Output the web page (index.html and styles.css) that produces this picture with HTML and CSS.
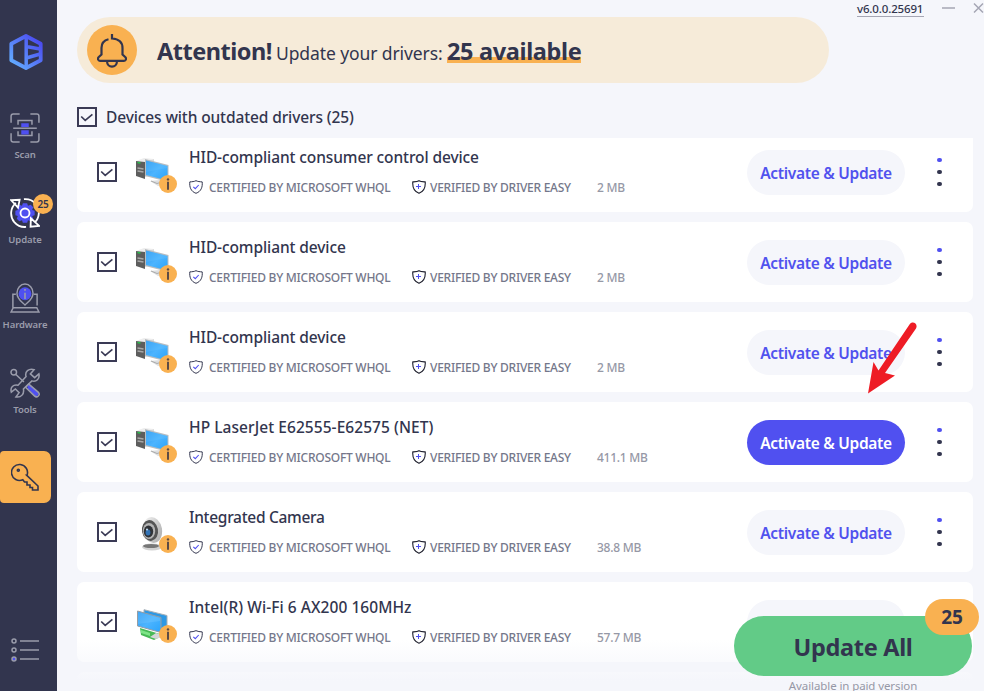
FILE: index.html
```
<!DOCTYPE html>
<html lang="en">

<head>
  <meta charset="UTF-8">
  <meta name="viewport" content="width=device-width, initial-scale=1.0">
  <title>Driver Easy</title>
  <link rel="stylesheet" href="styles.css">
</head>

<body>
  <!-- shared icons -->
  <svg class="sprite" width="0" height="0">
    <defs>
      <linearGradient id="screen" x1="0" y1="0" x2="1" y2="1">
        <stop offset="0" stop-color="#2a96ee" />
        <stop offset="0.5" stop-color="#4cb4ff" />
        <stop offset="1" stop-color="#2ba4fb" />
      </linearGradient>
      <linearGradient id="shell" x1="0" y1="0" x2="1" y2="1">
        <stop offset="0" stop-color="#fafafa" />
        <stop offset="1" stop-color="#a5a5a5" />
      </linearGradient>
      <linearGradient id="logo" gradientUnits="userSpaceOnUse" x1="4" y1="30" x2="30" y2="6">
        <stop offset="0" stop-color="#62aaff" />
        <stop offset="1" stop-color="#4b4bf0" />
      </linearGradient>
      <symbol id="check" viewBox="0 0 20 20">
        <rect x="1" y="1" width="18" height="18" fill="none" stroke="#3a3a55" stroke-width="2" />
        <path d="M4.200 9.500l4 3.800 7.200-6" fill="none" stroke="#3a3a55" stroke-width="1.700" />
      </symbol>
      <symbol id="shield-check" viewBox="0 0 14 14">
        <path d="M7 .7C5.300 1.600 3 1.700 .8 1.900C.4 7 1.600 11.300 7 13.300C12.400 11.300 13.600 7 13.200 1.900C11 1.700 8.700 1.600 7 .7z" fill="none" stroke="#32354e" />
        <path d="M4.300 6.800l2 1.900 3.400-3.700" fill="none" stroke="#5050f0" stroke-width="1.100" />
      </symbol>
      <symbol id="shield-plus" viewBox="0 0 14 14">
        <path d="M7 .7C5.300 1.600 3 1.700 .8 1.900C.4 7 1.600 11.300 7 13.300C12.400 11.300 13.600 7 13.200 1.900C11 1.700 8.700 1.600 7 .7z" fill="none" stroke="#1c1d2b" stroke-width="1.100" />
        <path d="M6.500 4v5M4 6.500h5" fill="none" stroke="#5050f0" />
      </symbol>
      <symbol id="info" viewBox="0 0 18 18">
        <circle cx="9" cy="9" r="9" fill="#f9b151" />
        <circle cx="9" cy="4.400" r="1.200" fill="#5c4a45" />
        <path d="M9 6.800v8" stroke="#5c4a45" stroke-width="2" />
      </symbol>
      <symbol id="computer" viewBox="0 0 42 38">
        <path d="M14 24l10-1 10 4-12 2z" fill="#dcdee0" />
        <path d="M15 24l6 2.500 5-1.500" fill="none" stroke="#aaa" />
        <path d="M0 4l8-3 10 1-9 3z" fill="#ededed" />
        <path d="M9 5l9-3v15l-9 3z" fill="#d9d9d9" />
        <path d="M0 4l9 1v17l-9-3z" fill="#5d5d5d" />
        <path d="M1.500 11l6 1M1.500 14l6 1" stroke="#a8a8a8" stroke-width="1.500" />
        <path d="M1.500 5.500l3 .4" stroke="#27c14b" stroke-width="1.500" />
        <path d="M9 2l23.500 6v17L9 19z" fill="#b9bdc1" />
        <path d="M10 3.500L31.500 9v14.500L10 18z" fill="url(#screen)" />
        <path d="M10 15l21.500-4V9L10 3.500z" fill="#6bc2ff" opacity=".3" />
      </symbol>
      <symbol id="webcam" viewBox="0 0 42 38">
        <ellipse cx="16" cy="30" rx="10" ry="3.500" fill="#d2d2d2" />
        <ellipse cx="15" cy="29" rx="8" ry="2" fill="#777" />
        <ellipse cx="16.500" cy="13" rx="9.500" ry="13" transform="rotate(-10 16.500 13)" fill="url(#shell)" />
        <ellipse cx="14" cy="13.500" rx="8" ry="10.500" transform="rotate(-10 14 13.500)" fill="#555" />
        <ellipse cx="13" cy="14" rx="6.200" ry="8" fill="#b5b5b5" />
        <ellipse cx="12.500" cy="14.500" rx="4.700" ry="6" fill="#303338" />
        <ellipse cx="12" cy="15.500" rx="2.400" ry="3" fill="#3273b5" />
        <circle cx="11" cy="12.500" r="1" fill="#cfe5fa" />
      </symbol>
      <symbol id="network" viewBox="0 0 42 38">
        <path d="M4 21l20 6v3l-6 3-13-5z" fill="#48b956" />
        <path d="M5 23l9 3v3l-9-3z" fill="#7de486" />
        <path d="M20 26l9 3-9 3-6-2z" fill="#d4d6d8" />
        <path d="M8 2.700l23 5.800v15l-23-6z" fill="#2d98e4" stroke="#a8afb5" />
        <path d="M1.500 4L25 10.500v15L1.500 19z" fill="url(#screen)" stroke="#969da3" />
        <path d="M2 17l22-3v-3L2 4.700z" fill="#79c9ff" opacity=".35" />
      </symbol>
    </defs>
  </svg>

  <div class="app">
    <nav class="sidebar">
      <svg class="logo" viewBox="0 0 34 36">
        <path d="M17 2L2.300 9.800v16.400L17 34l14.700-7.800V9.800z" fill="none" stroke="url(#logo)" stroke-width="3.800" stroke-linejoin="round" />
        <path d="M17.200 3v30M17.200 12.500l14 2.500M17.200 24l14-4" fill="none" stroke="url(#logo)" stroke-width="3.500" />
      </svg>

      <a class="nav-item scan">
        <svg viewBox="0 0 28 28">
          <path d="M1 9V3q0-2 2-2h6M19 1h6q2 0 2 2v6M27 19v6q0 2-2 2h-6M9 27H3q-2 0-2-2v-6" />
          <path d="M7.500 11V7h13v4M7.500 17v4h13v-4" />
          <path class="accent" d="M10.500 9.500h7V13h-7zM10.500 16h7v4h-7z" />
          <path d="M3 14.200h22" />
        </svg>
        <span>Scan</span>
      </a>

      <a class="nav-item update">
        <svg viewBox="0 0 28 28">
          <path class="accent" d="M12 5h4l.8 2.300 2.500-1 2.400 2.400-1 2.500L23 12v4l-2.300.8 1 2.500-2.400 2.400-2.500-1L16 23h-4l-.8-2.300-2.500 1-2.400-2.400 1-2.500L5 16v-4l2.300-.8-1-2.500 2.400-2.400 2.500 1z" />
          <circle cx="14" cy="14" r="4.200" />
          <path d="M5.500 4.500a13 13 0 0 0-1.500 18A13 13 0 0 0 15 27M13 1.100a13 13 0 0 1 11 4.400 13 13 0 0 1-1 17.500M1 2l8-.3L7.500 9zM19.500 19l-.3 7.800 8-.8z" />
        </svg>
        <span>Update</span>
        <b class="nav-badge">25</b>
      </a>

      <a class="nav-item hardware">
        <svg viewBox="0 0 28 28">
          <path d="M5.500 10.500H2.700V23M22 10.500h3.300V21M3 23h22l2 4H1z" />
          <path d="M14 20.500c-3-3-7.500-5.500-7.500-11a7.500 8.500 0 0 1 15 0c0 5.500-4.500 8-7.500 11z" />
          <circle class="accent" cx="14" cy="10" r="6" />
          <path d="M14 9v6M14 5.500v1.700" stroke-width="1.500" />
        </svg>
        <span>Hardware</span>
      </a>

      <a class="nav-item tools">
        <svg viewBox="0 0 28 28">
          <path d="M27 5.500l-4 3.500-4-3.500 3.500-4c-5-1.500-9 2-7.500 6.500L7.500 16C3 15 0 18 1.200 22.500L5 19.500 8.500 23l-3 4c5 1 8-3 7-7.500l8-7.500c4 1.200 7.500-2 6.500-6.500z" />
          <circle cx="3.500" cy="4" r="2.600" />
          <path d="M5.500 6l7.500 7" />
          <path class="accent" d="M17 16l2 .2 7 6.300c2 2-1.200 5-3.200 3.200L16.500 19l-.2-2z" />
          <path d="M14.500 18l3-3 8.800 7.500c2.500 2.500-1 6-3.500 3.500z" />
        </svg>
        <span>Tools</span>
      </a>

      <a class="key">
        <svg viewBox="0 0 28 28">
          <path d="M15.800 12.300L27 23v4h-5.500v-2.500H19V22h-3v-3h-2.500l-1.700-2.200A8 8 0 1 1 16 12.300z" />
          <circle cx="7.300" cy="7.300" r="1" />
        </svg>
      </a>

      <a class="menu">
        <svg viewBox="0 0 28 24">
          <circle cx="3" cy="3" r="2" />
          <circle cx="3" cy="12" r="2" />
          <circle class="active" cx="3" cy="21" r="2" />
          <path d="M9 3h19M9 12h19M9 21h19" />
        </svg>
      </a>
    </nav>

    <main class="content">
      <header class="titlebar">
        <a class="version">v6.0.0.25691</a>
        <svg class="window-controls" viewBox="0 0 44 16">
          <path d="M0 8h13M32 3.500l9 9M41 3.500l-9 9" />
        </svg>
      </header>

      <section class="banner">
        <div class="bell">
          <svg viewBox="0 0 30 35">
            <path d="M11.500 6.300C6.500 7.500 4.500 11 4.500 15v6.500L1.800 24c-1.500 1.500-.8 3.800 1.200 3.800h24c2 0 2.700-2.300 1.200-3.800l-2.700-2.500V15c0-6-4-9-10.500-9.500V1M10 28c0 7.500 10 7.500 10 0" />
          </svg>
        </div>
        <strong class="attention">Attention!</strong>
        <span class="message">Update your drivers:</span>
        <strong class="available">25 available</strong>
      </section>

      <div class="list-head">
        <svg class="checkbox"><use href="#check" /></svg>
        <span>Devices with outdated drivers (25)</span>
      </div>

      <section class="list">
        <article class="card">
          <svg class="checkbox"><use href="#check" /></svg>
          <div class="device"><svg><use href="#computer" /></svg><svg class="info"><use href="#info" /></svg></div>
          <div class="details">
            <h2>HID-compliant consumer control device</h2>
            <p><svg><use href="#shield-check" /></svg><span class="cert">CERTIFIED BY MICROSOFT WHQL</span><svg><use href="#shield-plus" /></svg><span class="verified">VERIFIED BY DRIVER EASY</span><span class="size">2 MB</span></p>
          </div>
          <button class="activate">Activate &amp; Update</button>
          <div class="dots"><i></i><i></i><i></i></div>
        </article>

        <article class="card">
          <svg class="checkbox"><use href="#check" /></svg>
          <div class="device"><svg><use href="#computer" /></svg><svg class="info"><use href="#info" /></svg></div>
          <div class="details">
            <h2>HID-compliant device</h2>
            <p><svg><use href="#shield-check" /></svg><span class="cert">CERTIFIED BY MICROSOFT WHQL</span><svg><use href="#shield-plus" /></svg><span class="verified">VERIFIED BY DRIVER EASY</span><span class="size">2 MB</span></p>
          </div>
          <button class="activate">Activate &amp; Update</button>
          <div class="dots"><i></i><i></i><i></i></div>
        </article>

        <article class="card">
          <svg class="checkbox"><use href="#check" /></svg>
          <div class="device"><svg><use href="#computer" /></svg><svg class="info"><use href="#info" /></svg></div>
          <div class="details">
            <h2>HID-compliant device</h2>
            <p><svg><use href="#shield-check" /></svg><span class="cert">CERTIFIED BY MICROSOFT WHQL</span><svg><use href="#shield-plus" /></svg><span class="verified">VERIFIED BY DRIVER EASY</span><span class="size">2 MB</span></p>
          </div>
          <button class="activate">Activate &amp; Update</button>
          <div class="dots"><i></i><i></i><i></i></div>
        </article>

        <article class="card">
          <svg class="checkbox"><use href="#check" /></svg>
          <div class="device"><svg><use href="#computer" /></svg><svg class="info"><use href="#info" /></svg></div>
          <div class="details">
            <h2 class="model">HP LaserJet E62555-E62575 (NET)</h2>
            <p><svg><use href="#shield-check" /></svg><span class="cert">CERTIFIED BY MICROSOFT WHQL</span><svg><use href="#shield-plus" /></svg><span class="verified">VERIFIED BY DRIVER EASY</span><span class="size">411.1 MB</span></p>
          </div>
          <button class="activate selected">Activate &amp; Update</button>
          <div class="dots"><i></i><i></i><i></i></div>
        </article>

        <article class="card">
          <svg class="checkbox"><use href="#check" /></svg>
          <div class="device"><svg><use href="#webcam" /></svg><svg class="info"><use href="#info" /></svg></div>
          <div class="details">
            <h2 class="camera">Integrated Camera</h2>
            <p><svg><use href="#shield-check" /></svg><span class="cert">CERTIFIED BY MICROSOFT WHQL</span><svg><use href="#shield-plus" /></svg><span class="verified">VERIFIED BY DRIVER EASY</span><span class="size">38.8 MB</span></p>
          </div>
          <button class="activate">Activate &amp; Update</button>
          <div class="dots"><i></i><i></i><i></i></div>
        </article>

        <article class="card">
          <svg class="checkbox"><use href="#check" /></svg>
          <div class="device"><svg><use href="#network" /></svg><svg class="info"><use href="#info" /></svg></div>
          <div class="details">
            <h2 class="model">Intel(R) Wi-Fi 6 AX200 160MHz</h2>
            <p><svg><use href="#shield-check" /></svg><span class="cert">CERTIFIED BY MICROSOFT WHQL</span><svg><use href="#shield-plus" /></svg><span class="verified">VERIFIED BY DRIVER EASY</span><span class="size">57.7 MB</span></p>
          </div>
          <button class="activate"></button>
        </article>

        <article class="card"></article>
      </section>

      <div class="fade"></div>

      <div class="update-all">
        <button>Update All</button>
        <b class="count">25</b>
        <span>Available in paid version</span>
      </div>

      <svg class="arrow" viewBox="0 0 50 74">
        <path d="M42.500 4.500L11.500 50.500 6.500 42 1 73.500 28 55.500 18 53 49 8.500C51.500 4 45.500 0 42.500 4.500z" fill="#ee1c25" />
      </svg>
    </main>
  </div>
</body>

</html>
```
FILE: styles.css
```
* {
  box-sizing: border-box;
}

body {
  margin: 0;
  background-color: #f5f6fb;
  color: #32354e;
  font-family: "Noto Sans", "Open Sans", sans-serif;
  overflow: hidden;
}

svg {
  display: block;
  flex: none;
}

.sprite {
  position: absolute;
}

button {
  border: none;
  padding: 0;
  font-family: inherit;
  cursor: pointer;
}

.app {
  display: flex;
  height: 691px;
}

/* sidebar */
.sidebar {
  display: flex;
  flex-direction: column;
  width: 57px;
  padding-top: 34px;
  background-color: #32354e;
}

.logo {
  width: 34px;
  height: 36px;
  margin: 0 0 43px 9px;
}

.nav-item {
  position: relative;
  display: flex;
  flex-direction: column;
  align-items: center;
  width: 50px;
  height: 85px;
  color: #9a9cab;
  font-size: 9.5px;
  font-weight: 600;
  line-height: 13px;
  letter-spacing: -0.1px;
}

.nav-item svg {
  width: 30px;
  height: 30px;
  margin-bottom: 5px;
  fill: none;
  stroke: #9a9cab;
  stroke-width: 1.4;
}

.nav-item .accent {
  fill: #4f50f0;
  stroke: none;
}

.nav-item.update svg {
  stroke: #fff;
  stroke-width: 1.7;
}

.nav-badge {
  position: absolute;
  top: -4px;
  left: 33px;
  width: 20px;
  height: 20px;
  border-radius: 50%;
  background-color: #f9b151;
  color: #32354e;
  font-size: 10px;
  font-weight: 600;
  line-height: 20px;
  text-align: center;
}

.key {
  width: 51px;
  height: 52px;
  margin-top: -2px;
  padding: 12px 11px;
  border-radius: 4px 7px 7px 4px;
  background-color: #f9b151;
}

.key svg {
  width: 28px;
  height: 28px;
  fill: none;
  stroke: #32354e;
  stroke-width: 1.6;
}

.menu {
  margin: auto 0 29px 11px;
}

.menu svg {
  width: 28px;
  height: 24px;
  fill: none;
  stroke: #9a9cab;
  stroke-width: 1.5;
}

.menu .active {
  fill: #4f50f0;
}

/* main area */
.content {
  position: relative;
  flex: 1;
  height: 691px;
  padding: 0 11px 0 20px;
  overflow: hidden;
}

.titlebar {
  display: flex;
  justify-content: flex-end;
  height: 17px;
}

.version {
  width: 67px;
  height: 17px;
  border-bottom: 1px solid #a5a6b4;
  font-size: 11.5px;
  font-weight: 500;
  line-height: 17px;
  letter-spacing: -0.15px;
  white-space: nowrap;
}

.window-controls {
  width: 44px;
  height: 16px;
  margin: 0 -13px 0 18px;
  fill: none;
  stroke: #a5a6b4;
  stroke-width: 1.5;
}

.banner {
  display: flex;
  align-items: baseline;
  width: 752px;
  height: 66px;
  padding-left: 10px;
  border-radius: 33px;
  background-color: #f6ebd9;
  line-height: 68px;
  white-space: nowrap;
}

.bell {
  align-self: center;
  display: flex;
  align-items: center;
  justify-content: center;
  width: 50px;
  height: 50px;
  margin-right: 20px;
  border-radius: 50%;
  background-color: #f9b151;
}

.bell svg {
  width: 30px;
  height: 35px;
  fill: none;
  stroke: #32354e;
  stroke-width: 2.2;
}

.attention {
  width: 119px;
  font-size: 23.5px;
  letter-spacing: -0.5px;
}

.message {
  width: 171px;
  font-size: 17.5px;
  letter-spacing: -0.1px;
}

.available {
  background: linear-gradient(#f9b151, #f9b151) 0 40px / 100% 6px no-repeat;
  font-size: 23.5px;
  letter-spacing: -0.35px;
}

.list-head {
  display: flex;
  align-items: center;
  gap: 9px;
  height: 55px;
  padding-top: 13px;
  font-size: 15.5px;
  font-weight: 500;
  letter-spacing: -0.12px;
}

.checkbox {
  width: 20px;
  height: 20px;
}

.list {
  height: 553px;
  overflow: hidden;
}

/* the list is scrolled down a little */
.card:first-child {
  margin-top: -6px;
}

.card {
  display: flex;
  align-items: center;
  height: 80px;
  margin-bottom: 10px;
  padding-left: 20px;
  border-radius: 7px;
  background-color: #fff;
}

.device {
  position: relative;
  width: 42px;
  height: 38px;
  margin: 7px 11px 0 19px;
}

.device svg {
  width: 42px;
  height: 38px;
}

.device .info {
  position: absolute;
  right: 1px;
  bottom: 2px;
  width: 18px;
  height: 18px;
}

.details {
  width: 558px;
}

.details h2 {
  margin: 0 0 10px;
  font-size: 15.5px;
  font-weight: 500;
  line-height: 20px;
  letter-spacing: -0.1px;
}

.details .model {
  letter-spacing: 0.06px;
}

.details .camera {
  letter-spacing: -0.3px;
}

.details p {
  display: flex;
  align-items: center;
  height: 20px;
  margin: 0;
  color: #74778a;
  font-size: 12px;
  font-weight: 500;
  letter-spacing: -0.25px;
  white-space: nowrap;
}

.details p svg {
  width: 14px;
  height: 14px;
}

.cert {
  width: 209px;
  padding-left: 6px;
}

.verified {
  width: 168px;
  padding-left: 4px;
}

.size {
  margin-left: 3px;
  color: #9698a6;
}

.activate {
  width: 158px;
  height: 45px;
  padding-top: 2px;
  border-radius: 23px;
  background-color: #f5f6fb;
  color: #5152ee;
  font-size: 15.5px;
  font-weight: 600;
  letter-spacing: -0.3px;
}

.activate.selected {
  background-color: #5050f0;
  color: #fff;
}

.dots {
  display: flex;
  flex-direction: column;
  gap: 7.5px;
  margin-left: 32px;
}

.dots i {
  width: 4.5px;
  height: 4.5px;
  border-radius: 50%;
  background-color: #32354e;
}

.dots i:first-child {
  background-color: #5050f0;
}

.fade {
  position: absolute;
  left: 0;
  right: 0;
  bottom: 0;
  height: 51px;
  background: linear-gradient(rgba(245, 246, 251, 0), #f5f6fb 80%);
}

.update-all {
  position: absolute;
  top: 616px;
  right: 12px;
  display: flex;
  flex-direction: column;
  align-items: center;
  width: 238px;
}

.update-all button {
  width: 238px;
  height: 60px;
  padding-top: 2px;
  border-radius: 30px;
  background-color: #62cb87;
  color: #32354e;
  font-size: 23.5px;
  font-weight: 700;
  letter-spacing: -0.3px;
}

.count {
  position: absolute;
  top: -17px;
  right: -7px;
  width: 54px;
  height: 36px;
  border-radius: 18px;
  background-color: #f9b151;
  font-size: 19px;
  line-height: 36px;
  text-align: center;
}

.update-all span {
  margin-top: 2px;
  color: #9698a6;
  font-size: 11.5px;
  line-height: 15px;
  letter-spacing: -0.1px;
}

/* pointer to the selected button */
.arrow {
  position: absolute;
  top: 320px;
  left: 810px;
  width: 50px;
  height: 74px;
}
```
